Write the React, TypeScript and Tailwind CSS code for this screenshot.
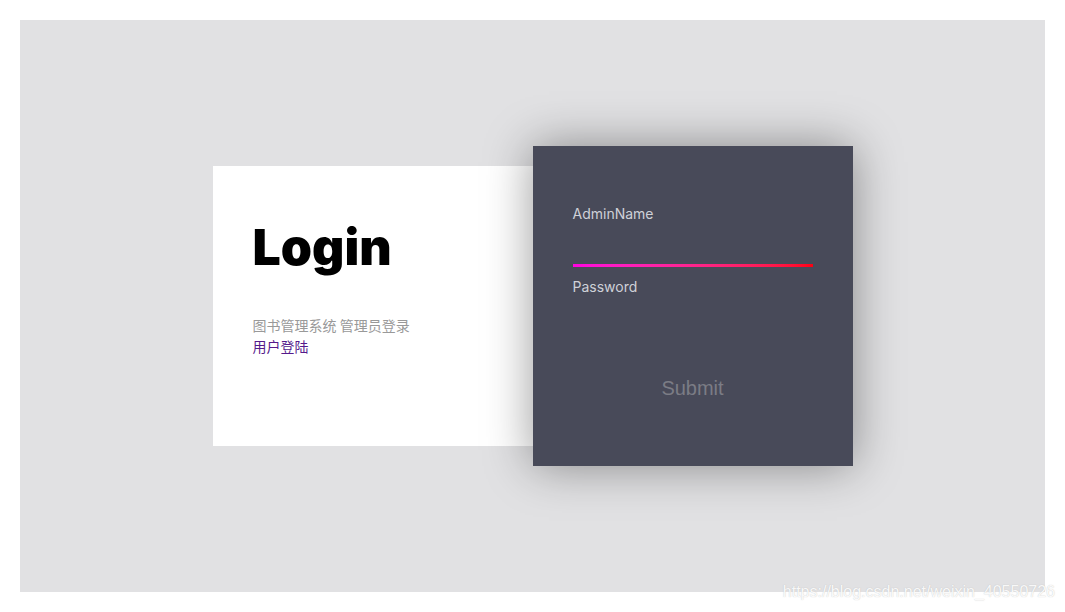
import React from "react";

export default function App() {
  return (
    <div className="relative w-full h-[612px] bg-white p-5 overflow-hidden" style={{ fontFamily: "Inter, 'Noto Sans CJK SC', sans-serif" }}>
      <div className="h-full bg-[#e1e1e3] flex items-center justify-center">
        <div className="flex items-center">
          <div className="w-[320px] h-[280px] bg-white px-10 pt-[50px] flex flex-col">
            <h1 className="text-[50px] leading-[62px] font-black text-black" style={{ fontFamily: "Inter, sans-serif" }}>
              Login
            </h1>
            <div className="mt-[37px] text-[14px] leading-[21px]" style={{ fontFamily: "'Noto Sans CJK SC', sans-serif" }}>
              <p className="text-[#999999]">图书管理系统 管理员登录</p>
              <a className="text-[#551a8b]">用户登陆</a>
            </div>
          </div>
          <div className="relative z-10 w-[320px] h-[320px] bg-[#484a59] px-10 pt-[58px] flex flex-col shadow-[0_0_45px_rgba(0,0,0,0.4)]">
            <label className="text-[14px] leading-[20px] text-[#cfd1d8]">AdminName</label>
            <div className="h-[40px]" />
            <div className="h-[3px] w-[240px] bg-gradient-to-r from-[#ff00e0] to-[#ff0010]" />
            <label className="mt-[10px] text-[14px] leading-[20px] text-[#cfd1d8]">Password</label>
            <div className="mt-[79px] text-center text-[20px] leading-[24px] text-[#7b7c85]" style={{ fontFamily: "'Liberation Sans', Arial, sans-serif" }}>
              Submit
            </div>
          </div>
        </div>
      </div>
      <div
        className="absolute right-[10px] top-[582px] text-[16px] leading-[20px] text-white/90"
        style={{ fontFamily: "'Liberation Sans', Arial, sans-serif", textShadow: "0 0 1px rgba(150,150,150,0.6)" }}
      >
        https://blog.csdn.net/weixin_40550726
      </div>
    </div>
  );
}
